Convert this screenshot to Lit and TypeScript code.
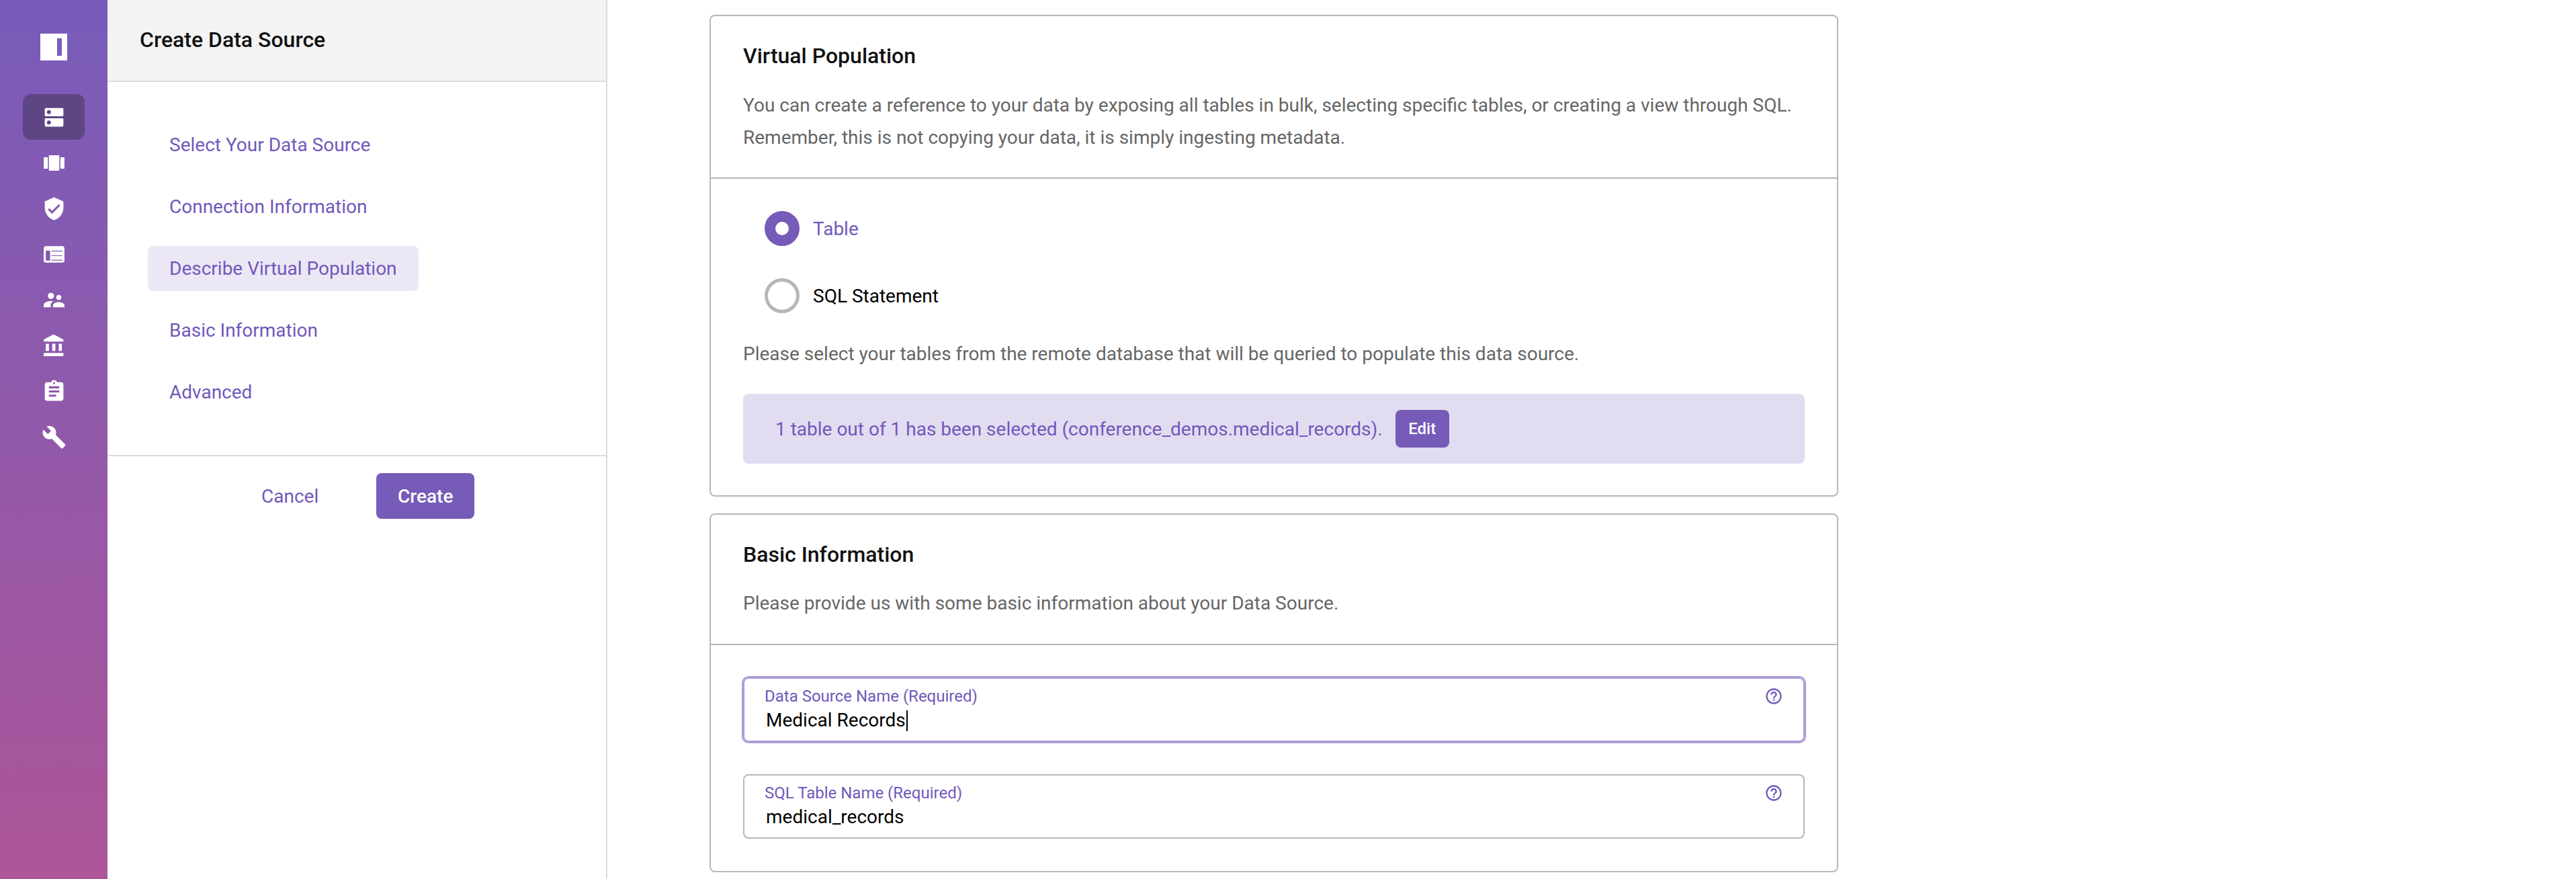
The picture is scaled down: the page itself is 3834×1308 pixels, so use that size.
import { LitElement, html, css, svg } from "lit";
import { customElement } from "lit/decorators.js";

const I: Record<string, any> = {
  dns: svg`<path d="M20 13H4c-.55 0-1 .45-1 1v6c0 .55.45 1 1 1h16c.55 0 1-.45 1-1v-6c0-.55-.45-1-1-1zM7 19c-1.1 0-2-.9-2-2s.9-2 2-2 2 .9 2 2-.9 2-2 2zM20 3H4c-.55 0-1 .45-1 1v6c0 .55.45 1 1 1h16c.55 0 1-.45 1-1V4c0-.55-.45-1-1-1zM7 9c-1.1 0-2-.9-2-2s.9-2 2-2 2 .9 2 2-.9 2-2 2z"/>`,
  carousel: svg`<path d="M7 19.500h10v-15H7v15zm-5-2h4v-11H2v11zm16-11v11h4v-11h-4z"/>`,
  shield: svg`<path d="M12 1L3 5v6c0 5.55 3.84 10.74 9 12 5.16-1.26 9-6.45 9-12V5l-9-4zm-2 16l-4-4 1.41-1.41L10 14.17l6.59-6.59L18 9l-8 8z"/>`,
  table: svg`<path fill-rule="evenodd" d="M20 4H4c-1.100 0-2 .9-2 2v12c0 1.100.9 2 2 2h16c1.100 0 2-.9 2-2V6c0-1.100-.9-2-2-2zM4 8.500h4.200V18H4V8.500zM9.500 8.500H20v.8H9.500v-.8zM9.500 12.900H20v.8H9.500v-.8zM9.500 17.200H20v.8H9.500v-.8z"/>`,
  people: svg`<path d="M16.5 12c1.38 0 2.49-1.12 2.49-2.5S17.88 7 16.5 7C15.12 7 14 8.12 14 9.5s1.12 2.5 2.5 2.5zM9 11c1.66 0 2.99-1.34 2.99-3S10.66 5 9 5C7.34 5 6 6.34 6 8s1.34 3 3 3zm7.5 3c-1.83 0-5.5.92-5.5 2.75V19h11v-2.25c0-1.83-3.67-2.75-5.5-2.75zM9 13c-2.33 0-7 1.17-7 3.5V19h6.75v-2.25c0-.85.33-2.34 2.37-3.47C10.25 13.1 9.51 13 9 13z"/>`,
  bank: svg`<path d="M4 10v7h3v-7H4zm6.250 0v7h3v-7h-3zM2 22h19v-3H2v3zm14.500-12v7h3v-7h-3zm-5-9L2 6v2h19V6l-9.500-5z"/>`,
  clip: svg`<path d="M19 3h-4.180C14.400 1.840 13.300 1 12 1c-1.300 0-2.400.84-2.820 2H5c-1.100 0-2 .9-2 2v14c0 1.100.9 2 2 2h14c1.100 0 2-.9 2-2V5c0-1.100-.9-2-2-2zm-7 0c.55 0 1 .45 1 1s-.45 1-1 1-1-.45-1-1 .45-1 1-1zm2 14H7v-2h7v2zm3-4H7v-2h10v2zm0-4H7V7h10v2z"/>`,
  wrench: svg`<path d="M22.700 19l-9.100-9.100c.9-2.300.4-5-1.500-6.900-2-2-5-2.400-7.400-1.300L9 6 6 9 1.600 4.700C.4 7.100.9 10.100 2.900 12.100c1.900 1.900 4.600 2.400 6.900 1.500l9.100 9.100c.4.4 1 .4 1.400 0l2.300-2.300c.5-.4.5-1.100.1-1.400z"/>`,
};
const HELP = svg`<path d="M11 18h2v-2h-2v2zm1-16C6.480 2 2 6.480 2 12s4.480 10 10 10 10-4.480 10-10S17.520 2 12 2zm0 18c-4.410 0-8-3.590-8-8s3.590-8 8-8 8 3.590 8 8-3.590 8-8 8zm0-14c-2.210 0-4 1.790-4 4h2c0-1.100.9-2 2-2s2 .9 2 2c0 2-3 1.750-3 5h2c0-2.250 3-2.500 3-5 0-2.210-1.790-4-4-4z"/>`;

@customElement("app-root")
export class AppRoot extends LitElement {
  static styles = css`
    :host { display: flex; width: 3834px; height: 1308px; overflow: hidden; background: #fff;
      font-family: Roboto, "Liberation Sans", sans-serif; font-size: 28px; color: #000; }
    .rail { width: 160px; flex: none; display: flex; flex-direction: column; align-items: center;
      background: linear-gradient(180deg, #775cba 0%, #ad5598 100%); }
    .logo { width: 40px; height: 40px; margin: 50px 0; background: #fff; box-sizing: border-box;
      display: flex; justify-content: flex-end; padding: 7px 8px 7px 0; }
    .logo i { display: block; width: 7px; background: #7a5cb8; }
    .ico { width: 92px; height: 68px; flex: none; display: flex; align-items: center; justify-content: center; border-radius: 12px; }
    .ico.on { background: #5e4584; }
    .ico svg { width: 37px; height: 37px; fill: #fff; }
    .panel { width: 744px; flex: none; box-sizing: border-box; border-right: 2px solid #dcdcdc; display: flex; flex-direction: column; }
    .phead { height: 122px; box-sizing: border-box; background: #f3f3f3; border-bottom: 2px solid #dcdcdc;
      padding: 0 48px 2px; display: flex; align-items: center; font-size: 32px; font-weight: 500; color: #111; }
    .steps { list-style: none; margin: 0; padding: 60px; display: flex; flex-direction: column; gap: 24px; height: 557px; box-sizing: border-box; border-bottom: 2px solid #dcdcdc; }
    .steps li { height: 68px; box-sizing: border-box; padding: 0 32px; display: flex; align-items: center; width: fit-content; color: #7158bb; border-radius: 8px; }
    .steps li.on { background: #ebe7f5; }
    .actions { display: flex; align-items: center; padding-top: 25px; padding-left: 229px; gap: 86px; }
    .cancel { color: #7158bb; }
    .create { height: 68px; width: 146px; display: flex; align-items: center; justify-content: center; background: #765bb8; color: #fff; border-radius: 8px; font-weight: 500; }
    main { flex: none; width: 1680px; margin-left: 152px; padding-top: 22px; display: flex; flex-direction: column; gap: 25px; }
    .card { border: 2px solid #b7b7b7; border-radius: 8px; box-sizing: border-box; }
    .chead { padding: 39px 48px 0; border-bottom: 2px solid #b7b7b7; box-sizing: border-box; }
    .title { font-size: 32px; font-weight: 500; color: #111; line-height: 40px; }
    .desc { color: #666; line-height: 48px; margin: 0; }
    .c1 .chead { height: 242px; }
    .c1 .desc { margin-top: 30px; }
    .c2 .chead { height: 194px; }
    .c2 .desc { margin-top: 29px; }
    .cbody { padding: 48px; display: flex; flex-direction: column; }
    .c1 .cbody { padding-bottom: 47px; }
    .radio { display: flex; align-items: center; gap: 20px; margin-left: 32px; height: 52px; }
    .dot { width: 52px; height: 52px; border-radius: 50%; box-sizing: border-box; border: 5px solid #b7b7b7; background: #fff; }
    .dot.on { border: 16px solid #765bb8; }
    .radio.on { color: #7158bb; }
    .radio + .radio { margin-top: 48px; }
    .c1 .desc.sel { margin-top: 37px; }
    .banner { margin-top: 35px; height: 104px; box-sizing: border-box; background: #e2dcf1; border-radius: 8px; padding: 0 48px;
      display: flex; align-items: center; gap: 19px; color: #7158bb; }
    .edit { height: 56px; width: 80px; display: flex; align-items: center; justify-content: center; background: #765bb8; color: #fff; border-radius: 8px; font-size: 24px; font-weight: 500; }
    .field { height: 96px; box-sizing: border-box; border: 2px solid #b7b7b7; border-radius: 8px; padding: 12px 30px 0; position: relative; }
    .field + .field { margin-top: 48px; }
    .field.focus { border-color: #ae9dd8; box-shadow: 0 0 0 2px #ae9dd8; }
    .field label { display: block; font-size: 24px; line-height: 28px; color: #7158bb; }
    .val { display: block; padding-left: 2px; line-height: 40px; margin-top: 2px; color: #000; }
    .caret { display: inline-block; width: 2px; height: 31px; background: #000; vertical-align: -7px; margin-left: 1px; }
    .help { position: absolute; right: 30px; top: 12px; width: 28px; height: 28px; fill: #7158bb; }
  `;

  render() {
    const steps = ["Select Your Data Source", "Connection Information", "Describe Virtual Population", "Basic Information", "Advanced"];
    const icons = ["dns", "carousel", "shield", "table", "people", "bank", "clip", "wrench"];
    const field = (label: string, value: string, focus = false) => html`
      <div class="field ${focus ? "focus" : ""}">
        <label>${label}</label>
        <span class="val">${value}${focus ? html`<i class="caret"></i>` : ""}</span>
        <svg class="help" viewBox="0 0 24 24">${HELP}</svg>
      </div>`;
    return html`
      <nav class="rail">
        <div class="logo"><i></i></div>
        ${icons.map((n, i) => html`<div class="ico ${i === 0 ? "on" : ""}"><svg viewBox="0 0 24 24">${I[n]}</svg></div>`)}
      </nav>
      <aside class="panel">
        <div class="phead">Create Data Source</div>
        <ul class="steps">
          ${steps.map((s, i) => html`<li class="${i === 2 ? "on" : ""}">${s}</li>`)}
        </ul>
        <div class="actions"><span class="cancel">Cancel</span><span class="create">Create</span></div>
      </aside>
      <main>
        <section class="card c1">
          <div class="chead">
            <div class="title">Virtual Population</div>
            <p class="desc">You can create a reference to your data by exposing all tables in bulk, selecting specific tables, or creating a view through SQL. Remember, this is not copying your data, it is simply ingesting metadata.</p>
          </div>
          <div class="cbody">
            <div class="radio on"><span class="dot on"></span>Table</div>
            <div class="radio"><span class="dot"></span>SQL Statement</div>
            <p class="desc sel">Please select your tables from the remote database that will be queried to populate this data source.</p>
            <div class="banner"><span>1 table out of 1 has been selected (conference_demos.medical_records).</span><span class="edit">Edit</span></div>
          </div>
        </section>
        <section class="card c2">
          <div class="chead">
            <div class="title">Basic Information</div>
            <p class="desc">Please provide us with some basic information about your Data Source.</p>
          </div>
          <div class="cbody">
            ${field("Data Source Name (Required)", "Medical Records", true)}
            ${field("SQL Table Name (Required)", "medical_records")}
          </div>
        </section>
      </main>
    `;
  }
}
